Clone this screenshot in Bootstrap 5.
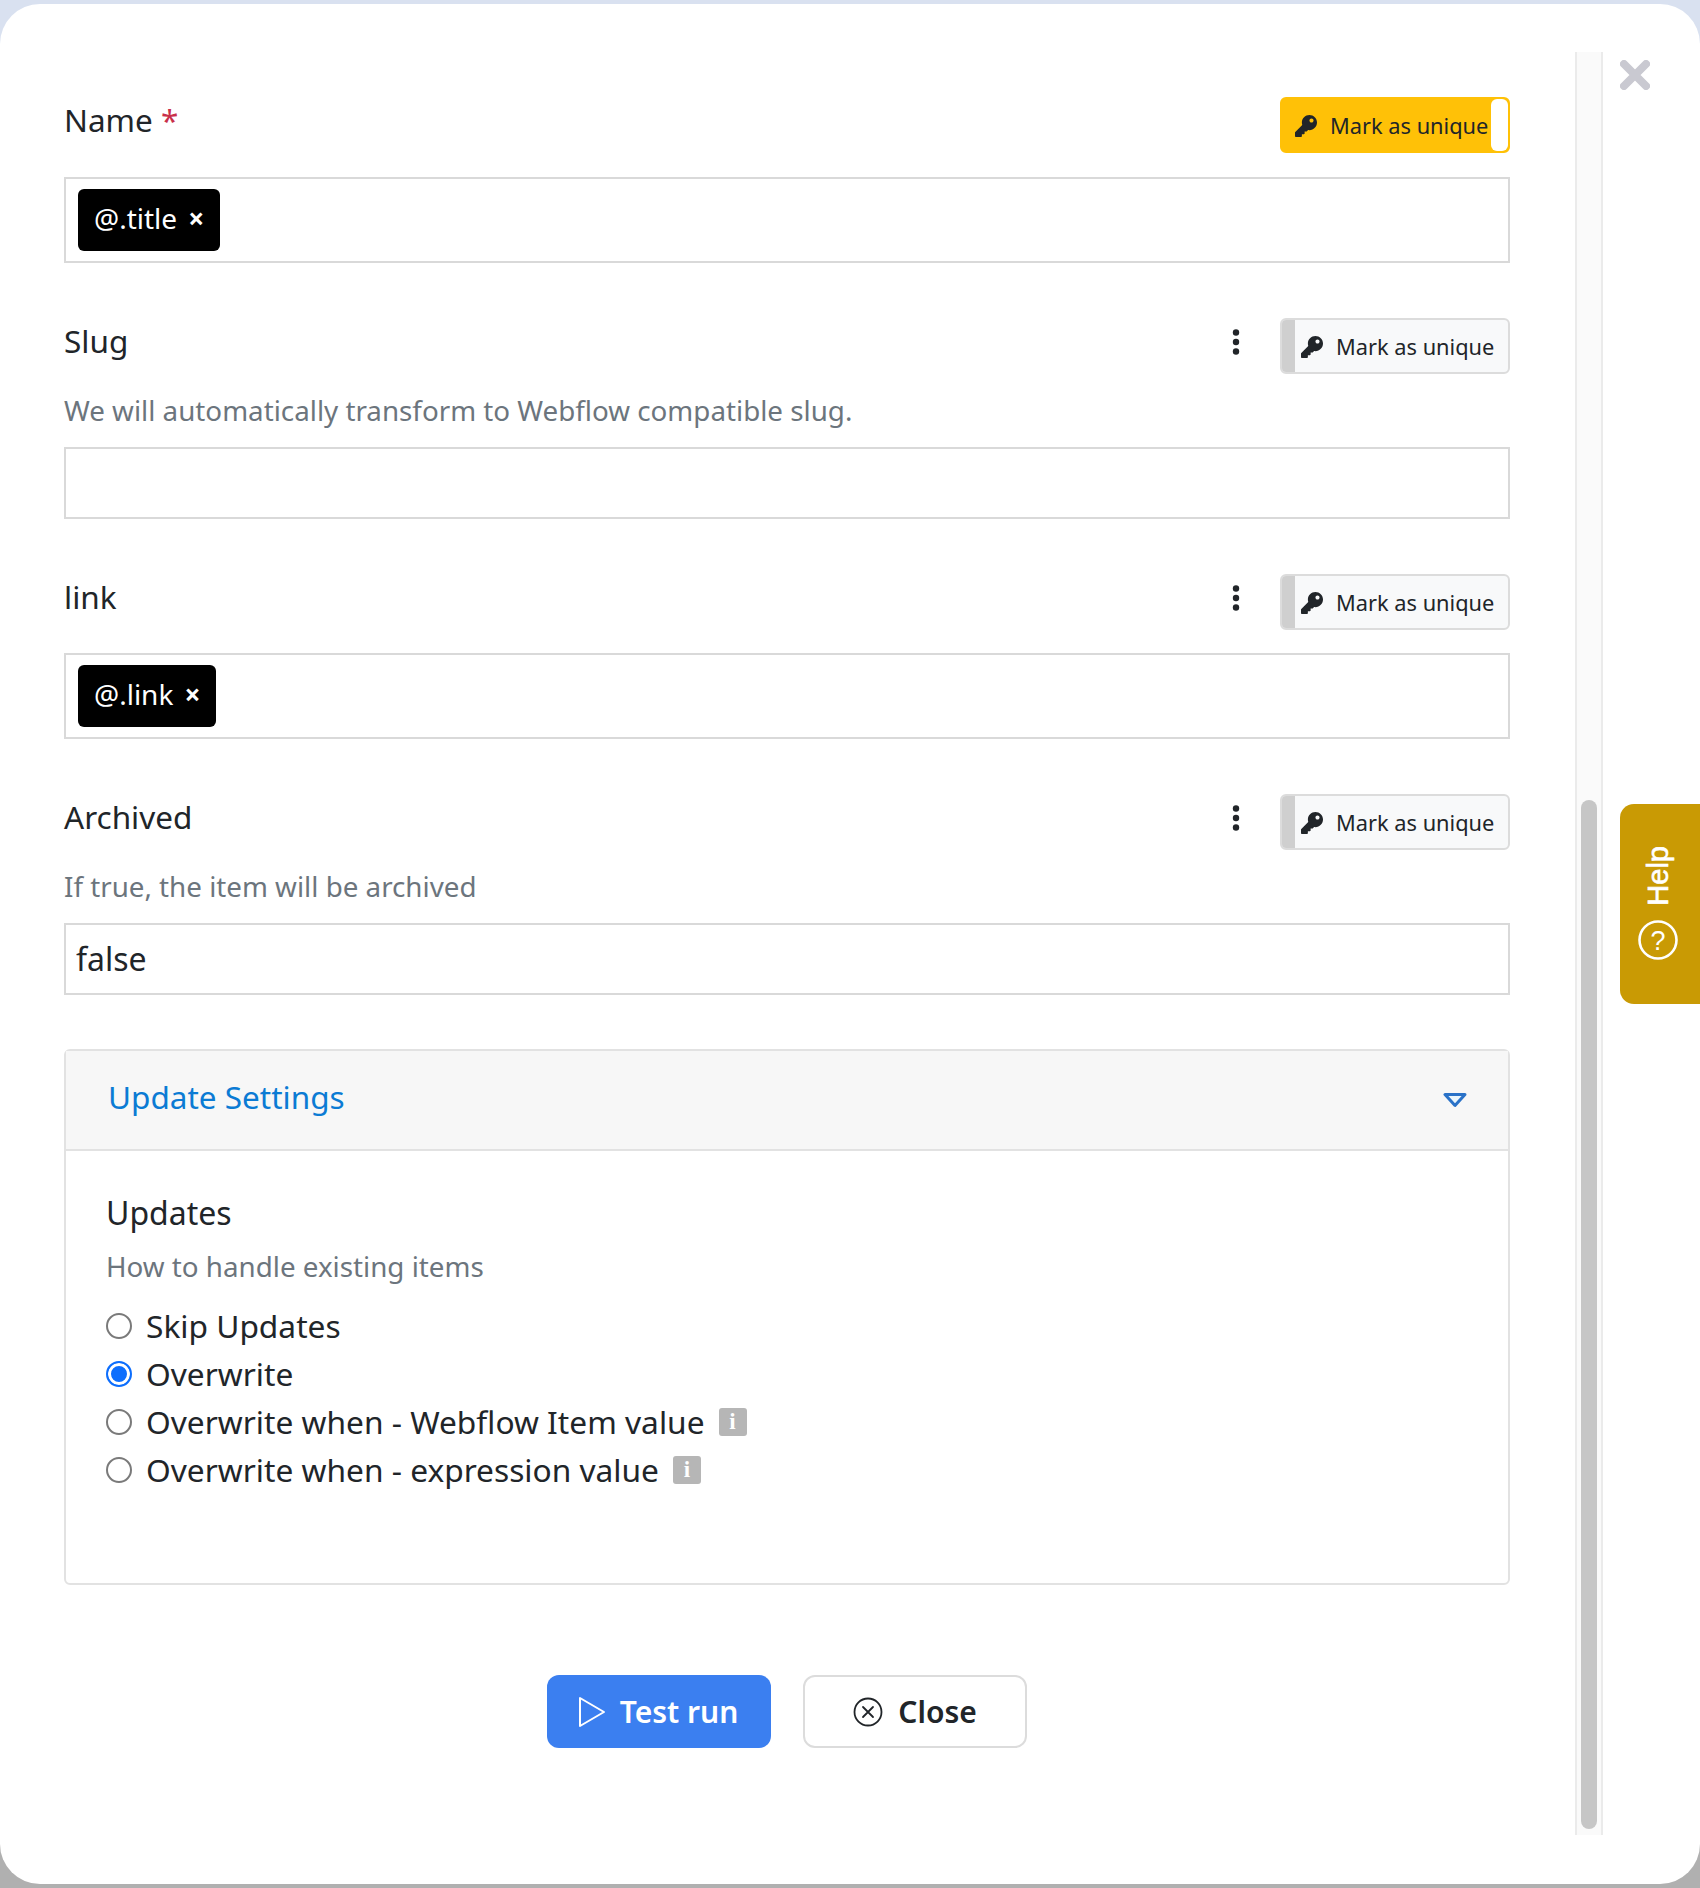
<!DOCTYPE html>
<html lang="en">
<head>
  <meta charset="UTF-8">
  <title>Webflow item</title>
  <link href="https://cdn.jsdelivr.net/npm/bootstrap@5.3.3/dist/css/bootstrap.min.css" rel="stylesheet">
  <style>
    html, body { height: 1888px; overflow: hidden; }
    body {
      margin: 0;
      font-family: "Noto Sans", "Open Sans", sans-serif;
      color: #212529;
      background: linear-gradient(#d9e1f0 0, #d9e1f0 200px, #b0b0b0 1700px);
    }
    .shell { position: relative; margin-top: 4px; height: 1880px; background: #fff; border-radius: 40px; }
    .form-pane { width: 1575px; padding: 93px 65px 0 64px; }
    .field { margin-bottom: 55px; }
    .field.last { margin-bottom: 54px; }
    .field-head { height: 56px; margin-bottom: 24px; }
    .field-head.tight { margin-bottom: 23px; }
    .field-head.has-desc { margin-bottom: 0; }
    .field-label { font-size: 31.5px; line-height: 40px; margin-bottom: 11px; }
    .req { color: #c9304a; }
    .field-desc { font-size: 27.75px; line-height: 73px; color: #6c757d; }
    .dots { margin-right: 40px; margin-bottom: 8px; }
    .uniq-btn {
      width: 230px; height: 56px; padding: 0;
      background: #f8f9fa; border: 2px solid #dcdcdc; border-radius: 6px;
      font-size: 21.8px; line-height: 1; color: #212529; overflow: hidden; white-space: nowrap;
    }
    .uniq-btn:hover { background: #f8f9fa; border-color: #dcdcdc; }
    .uniq-grip { width: 13px; flex: none; background: #cfcfcf; }
    .uniq-btn.on, .uniq-btn.on:hover { background: #ffc107; border-color: #ffc107; }
    .uniq-btn.on .uniq-grip { width: 17px; background: #fff; border-radius: 6px; }
    .uniq-inner { gap: 13px; padding: 2px 0 0 6px; }
    .uniq-btn.on .uniq-inner { padding-left: 13px; }
    .box {
      border: 2px solid #d9d9d9; border-radius: 0; padding: 9px 10px 11px;
      font-size: 32px; color: #212529; height: 72px;
    }
    .box:focus { border-color: #d9d9d9; box-shadow: none; }
    .box.tagged { height: 86px; padding: 10px 12px; }
    .tag-pill {
      height: 62px; padding: 0 16px 5px; background: #000; color: #fff;
      border-radius: 6px; font-size: 28px; font-weight: 400;
    }
    .tag-x { font-size: 28px; font-weight: 700; margin-left: 11px; }
    .upd-card { height: 536px; border: 2px solid #e2e2e2; border-radius: 6px; }
    .upd-head { height: 100px; padding: 0 41px 0 42px; background: #f7f7f7; border-bottom: 2px solid #e2e2e2; }
    .upd-title { font-size: 31.5px; color: #0b7bd4; margin-bottom: 6px; }
    .upd-body { padding: 40px 40px 0; }
    .sub-label { font-size: 32px; line-height: 44px; }
    .sub-desc { font-size: 27.75px; line-height: 62px; color: #6c757d; margin-bottom: 5px; }
    .opt { min-height: 48px; height: 48px; padding-left: 40px; margin: 0; display: flex; align-items: center; }
    .opt .form-check-input {
      width: 26px; height: 26px; margin: 0 0 0 -40px; float: none;
      border: 2px solid #7a7a7a; flex: none;
    }
    .opt .form-check-input:checked {
      background: #0d6efd; background-image: none; border-color: #0d6efd;
      box-shadow: inset 0 0 0 3px #fff;
    }
    .opt .form-check-input:focus { box-shadow: none; }
    .opt .form-check-input:checked:focus { box-shadow: inset 0 0 0 3px #fff; }
    .opt .form-check-label { margin-left: 14px; font-size: 31.7px; line-height: 48px; }
    .info-chip {
      width: 28px; height: 28px; margin-left: 14px; background: #b6b6b6; color: #fff;
      border-radius: 3px; font: 700 23px/28px "Liberation Serif", serif; text-align: center;
    }
    .act-row { margin-top: 90px; gap: 32px; }
    .act-btn {
      width: 224px; height: 73px; padding: 0; gap: 14px;
      border-radius: 12px; font-size: 30px; font-weight: 600;
    }
    .act-run, .act-run:hover { background: #3b7ff0; border: 0; color: #fff; padding-right: 2px; }
    .act-close, .act-close:hover { background: #fff; border: 2px solid #dcdcdc; color: #212529; gap: 15px; }
    .rail {
      width: 28px; height: 1783px; margin-top: 48px; padding: 748px 4px 6px 4px;
      background: #fafafa; border-left: 2px solid #ebebeb; border-right: 2px solid #ebebeb;
    }
    .rail-thumb { height: 100%; background: #c6c6c6; border-radius: 8px; }
    .x-btn { margin: 56px 0 0 17px; }
    .help-tab {
      position: absolute; right: 0; top: 800px; width: 80px; height: 200px;
      background: #c99a04; color: #fff; border-radius: 14px 0 0 14px;
      padding-top: 42px; padding-right: 4px;
    }
    .help-txt {
      writing-mode: vertical-rl; transform: rotate(180deg);
      font: 400 29px/1 "Liberation Sans", Arial, sans-serif; -webkit-text-stroke: .6px #fff; margin-bottom: 14px;
    }
  </style>
</head>
<body>
  <svg class="d-none">
    <symbol id="key" viewBox="0 0 512 512"><path fill="currentColor" d="M512 176.001C512 273.203 433.202 352 336 352c-11.22 0-22.19-1.062-32.827-3.069l-24.012 27.014A23.999 23.999 0 0 1 261.223 384H224v40c0 13.255-10.745 24-24 24h-40v40c0 13.255-10.745 24-24 24H24c-13.255 0-24-10.745-24-24v-78.059c0-6.365 2.529-12.47 7.029-16.971l161.802-161.802C163.108 213.814 160 195.271 160 176 160 78.798 238.797.001 335.999 0 433.488-.001 512 78.511 512 176.001zM336 128c0 26.51 21.49 48 48 48s48-21.49 48-48-21.49-48-48-48-48 21.49-48 48z"/></symbol>
    <symbol id="dots" viewBox="0 0 8 26"><circle cx="4" cy="3.5" r="3.2" fill="#212529"/><circle cx="4" cy="13" r="3.2" fill="#212529"/><circle cx="4" cy="22.5" r="3.2" fill="#212529"/></symbol>
  </svg>

  <div class="shell d-flex">
    <div class="form-pane">

      <div class="field">
        <div class="field-head d-flex align-items-center justify-content-between">
          <label class="field-label">Name <span class="req">*</span></label>
          <button class="btn uniq-btn on d-flex align-items-stretch">
            <span class="uniq-inner d-flex align-items-center flex-grow-1">
              <svg width="22" height="22"><use href="#key"/></svg><span>Mark as unique</span>
            </span>
            <span class="uniq-grip"></span>
          </button>
        </div>
        <div class="form-control box tagged d-flex align-items-center">
          <span class="badge tag-pill d-inline-flex align-items-center">@.title<span class="tag-x">×</span></span>
        </div>
      </div>

      <div class="field">
        <div class="field-head has-desc d-flex align-items-center">
          <label class="field-label me-auto">Slug</label>
          <svg class="dots" width="8" height="26"><use href="#dots"/></svg>
          <button class="btn uniq-btn d-flex align-items-stretch">
            <span class="uniq-grip"></span>
            <span class="uniq-inner d-flex align-items-center">
              <svg width="22" height="22"><use href="#key"/></svg><span>Mark as unique</span>
            </span>
          </button>
        </div>
        <div class="field-desc">We will automatically transform to Webflow compatible slug.</div>
        <input class="form-control box" type="text">
      </div>

      <div class="field">
        <div class="field-head tight d-flex align-items-center">
          <label class="field-label me-auto">link</label>
          <svg class="dots" width="8" height="26"><use href="#dots"/></svg>
          <button class="btn uniq-btn d-flex align-items-stretch">
            <span class="uniq-grip"></span>
            <span class="uniq-inner d-flex align-items-center">
              <svg width="22" height="22"><use href="#key"/></svg><span>Mark as unique</span>
            </span>
          </button>
        </div>
        <div class="form-control box tagged d-flex align-items-center">
          <span class="badge tag-pill d-inline-flex align-items-center">@.link<span class="tag-x">×</span></span>
        </div>
      </div>

      <div class="field last">
        <div class="field-head has-desc d-flex align-items-center">
          <label class="field-label me-auto">Archived</label>
          <svg class="dots" width="8" height="26"><use href="#dots"/></svg>
          <button class="btn uniq-btn d-flex align-items-stretch">
            <span class="uniq-grip"></span>
            <span class="uniq-inner d-flex align-items-center">
              <svg width="22" height="22"><use href="#key"/></svg><span>Mark as unique</span>
            </span>
          </button>
        </div>
        <div class="field-desc">If true, the item will be archived</div>
        <input class="form-control box" type="text" value="false">
      </div>

      <div class="card upd-card">
        <div class="upd-head d-flex align-items-center justify-content-between">
          <span class="upd-title">Update Settings</span>
          <svg width="24" height="16" viewBox="0 0 24 16"><path d="M2 2.5h20L12 13.5z" fill="#eaf6fd" stroke="#2a72c8" stroke-width="3" stroke-linejoin="round"/></svg>
        </div>
        <div class="upd-body">
          <div class="sub-label">Updates</div>
          <div class="sub-desc">How to handle existing items</div>
          <div class="form-check opt">
            <input class="form-check-input" type="radio" name="upd" id="u1">
            <label class="form-check-label" for="u1">Skip Updates</label>
          </div>
          <div class="form-check opt">
            <input class="form-check-input" type="radio" name="upd" id="u2" checked>
            <label class="form-check-label" for="u2">Overwrite</label>
          </div>
          <div class="form-check opt">
            <input class="form-check-input" type="radio" name="upd" id="u3">
            <label class="form-check-label" for="u3">Overwrite when - Webflow Item value</label>
            <span class="info-chip">i</span>
          </div>
          <div class="form-check opt">
            <input class="form-check-input" type="radio" name="upd" id="u4">
            <label class="form-check-label" for="u4">Overwrite when - expression value</label>
            <span class="info-chip">i</span>
          </div>
        </div>
      </div>

      <div class="act-row d-flex justify-content-center">
        <button class="btn act-btn act-run d-flex align-items-center justify-content-center">
          <svg width="28" height="34" viewBox="0 0 28 34"><path d="M2 3v28l24-14z" fill="none" stroke="#fff" stroke-width="2" stroke-linejoin="round"/></svg>
          Test run
        </button>
        <button class="btn act-btn act-close d-flex align-items-center justify-content-center">
          <svg width="30" height="30" viewBox="0 0 30 30"><circle cx="15" cy="15" r="13.5" fill="none" stroke="#212529" stroke-width="1.8"/><path d="M10 10l10 10M20 10L10 20" stroke="#212529" stroke-width="1.8" stroke-linecap="round"/></svg>
          Close
        </button>
      </div>
    </div>

    <div class="rail flex-shrink-0"><div class="rail-thumb"></div></div>

    <div class="flex-grow-1">
      <svg class="x-btn" width="30" height="30" viewBox="0 0 30 30"><path d="M4 4l22 22M26 4L4 26" stroke="#c9c9d1" stroke-width="8" stroke-linecap="round"/></svg>
    </div>

    <div class="help-tab d-flex flex-column align-items-center">
      <span class="help-txt">Help</span>
      <svg width="40" height="40" viewBox="0 0 40 40"><circle cx="20" cy="20" r="18.5" fill="none" stroke="#fff" stroke-width="2.6"/><text x="20" y="29.5" text-anchor="middle" fill="#fff" font-family="Liberation Sans, sans-serif" font-size="27">?</text></svg>
    </div>
  </div>

  <script src="https://cdn.jsdelivr.net/npm/bootstrap@5.3.3/dist/js/bootstrap.bundle.min.js"></script>
</body>
</html>
